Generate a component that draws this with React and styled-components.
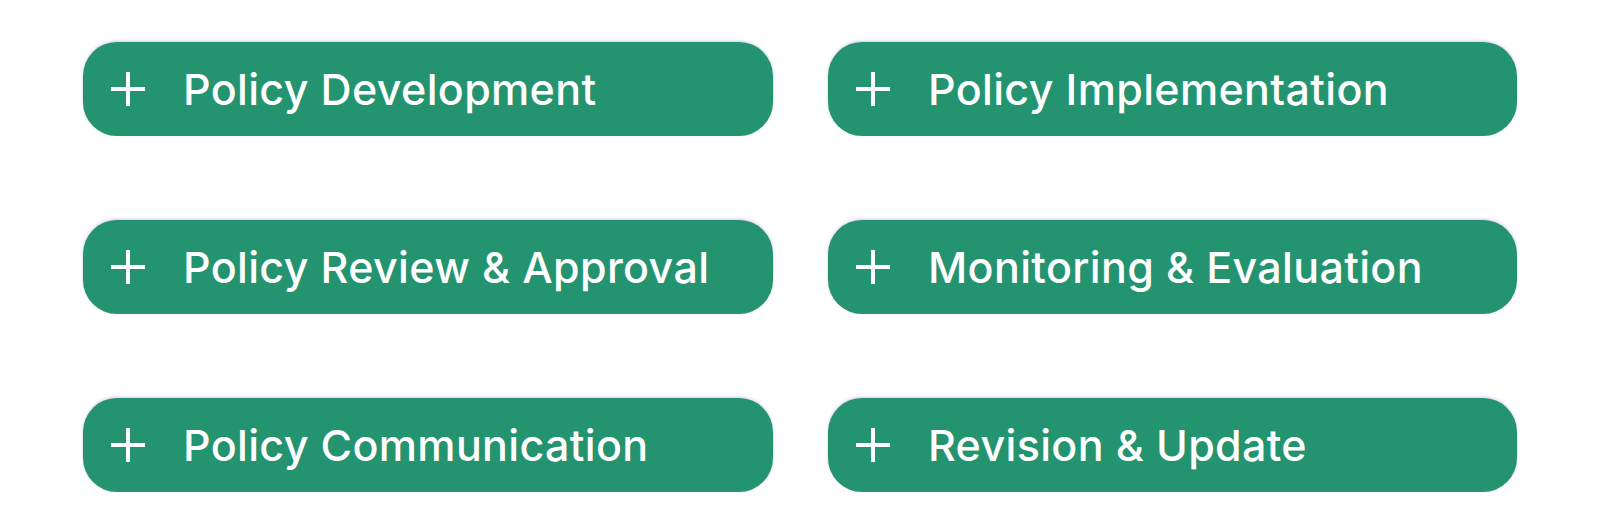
import styled, { createGlobalStyle } from "styled-components";

const GlobalStyle = createGlobalStyle`
  body {
    margin: 0;
    background: #ffffff;
    font-family: Inter, "Noto Sans", sans-serif;
  }
`;

const Grid = styled.div`
  display: grid;
  grid-template-columns: 690px 689px;
  column-gap: 55px;
  row-gap: 84px;
  padding: 42px 0 0 83px;
`;

const Pill = styled.button`
  display: flex;
  align-items: center;
  height: 94px;
  padding: 0 0 0 27px;
  border: none;
  border-radius: 34px;
  background: #23946f;
  color: #ffffff;
  box-shadow: 0 -1px 3px rgba(150, 130, 200, 0.45);
  font-family: Inter, "Noto Sans", sans-serif;
  font-size: 43px;
  font-weight: 550;
  letter-spacing: 0.35px;
  cursor: pointer;
  text-align: left;
`;

const PlusIcon = styled.svg`
  width: 36px;
  height: 36px;
  flex-shrink: 0;
  margin-right: 37px;
`;

const Label = styled.span`
  white-space: nowrap;
`;

const items = [
  "Policy Development",
  "Policy Implementation",
  "Policy Review & Approval",
  "Monitoring & Evaluation",
  "Policy Communication",
  "Revision & Update",
];

export default function App() {
  return (
    <>
      <GlobalStyle />
      <Grid>
        {items.map((label) => (
          <Pill key={label}>
            <PlusIcon viewBox="0 0 36 36">
              <path d="M18 1v34M1 18h34" stroke="#fff" strokeWidth="4" />
            </PlusIcon>
            <Label>{label}</Label>
          </Pill>
        ))}
      </Grid>
    </>
  );
}
